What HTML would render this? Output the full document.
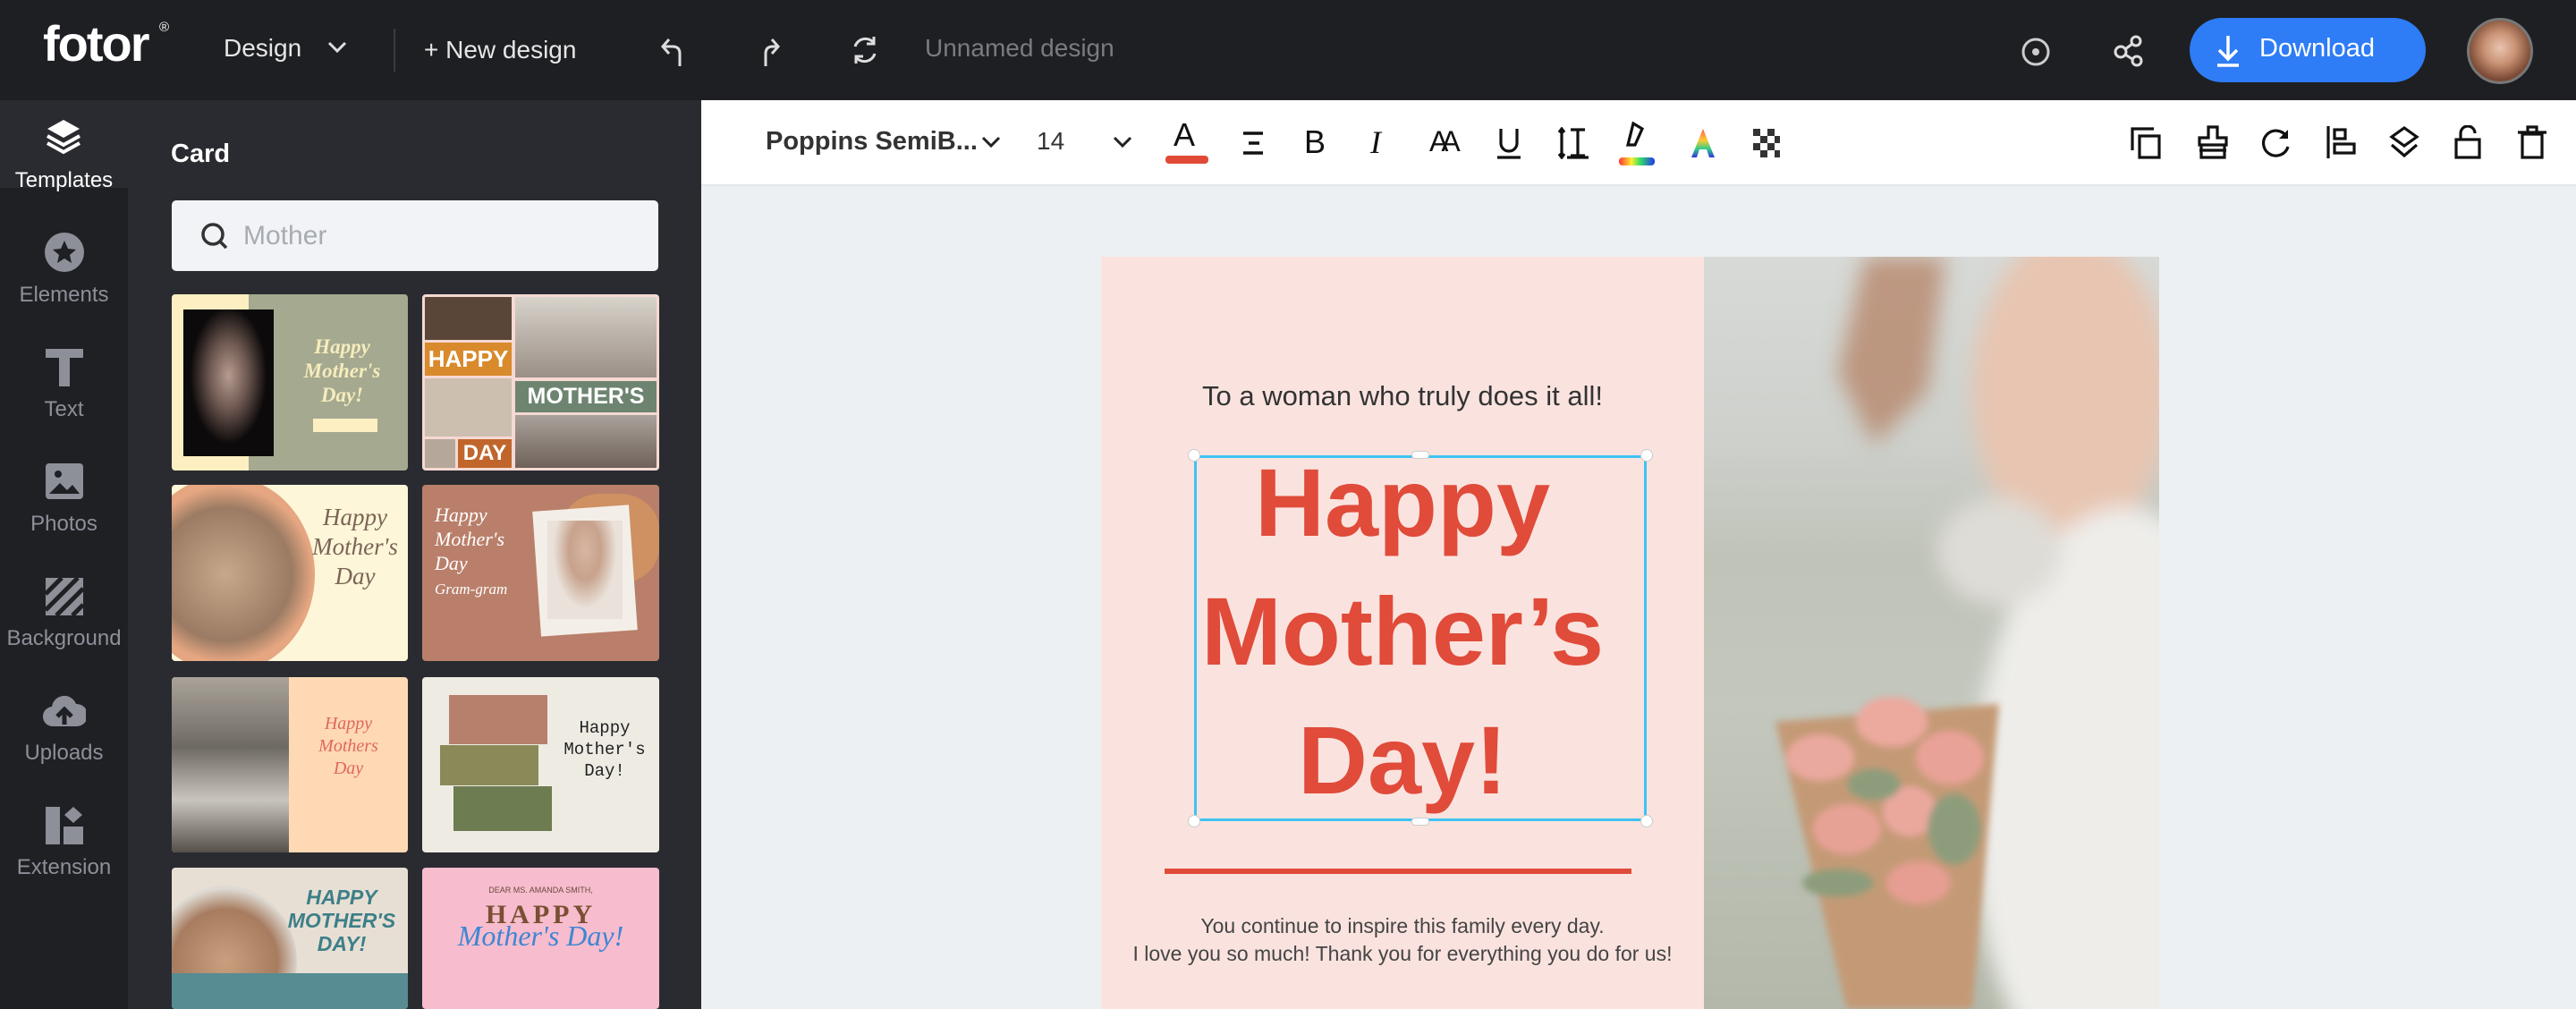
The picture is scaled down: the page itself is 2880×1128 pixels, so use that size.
<!DOCTYPE html>
<html><head><meta charset="utf-8"><style>
*{margin:0;padding:0;box-sizing:border-box}
html{overflow:hidden}
body{width:2880px;height:1128px;overflow:hidden;background:#edf0f3;font-family:"Liberation Sans",sans-serif;position:relative}
.a{position:absolute}
.top{left:0;top:0;width:2880px;height:112px;background:#1e1f23}
.rail{left:0;top:112px;width:143px;height:1016px;background:#1f2024}
.panel{left:143px;top:112px;width:641px;height:1016px;background:#2a2b30}
.tb{left:784px;top:112px;width:2096px;height:96px;background:#fff;border-bottom:2px solid #e3e6ea}
.ri{width:143px;text-align:center;color:#8d8f99;font-size:24px}
.th{border-radius:4px;overflow:hidden}
.ic{stroke:#111;fill:none;stroke-width:3.2}
</style></head><body>
<div class="a top"></div>
<div class="a" style="left:48px;top:16px;color:#fff;font-size:56px;font-weight:bold;letter-spacing:-2px">fotor</div>
<div class="a" style="left:178px;top:22px;color:#fff;font-size:15px">®</div>
<div class="a" style="left:250px;top:38px;color:#e6e6e6;font-size:28px">Design</div>
<svg class="a" style="left:366px;top:46px" width="22" height="14"><path d="M2 2l9 9 9-9" stroke="#ddd" stroke-width="3" fill="none"/></svg>
<div class="a" style="left:440px;top:32px;width:2px;height:48px;background:#3a3b40"></div>
<div class="a" style="left:474px;top:32px;color:#e6e6e6;font-size:28px;line-height:48px">+ New design</div>
<svg class="a" style="left:738px;top:36px" width="150" height="44"><path d="M22 38V24q0-8-8-8H4M10 8L3 16l7 8" stroke="#ddd" stroke-width="3" fill="none"/><path d="M106 38V24q0-8 8-8h6M113 8l7 8-7 8" stroke="#ddd" stroke-width="3" fill="none" transform="translate(12 0)"/></svg>
<svg class="a" style="left:950px;top:38px" width="34" height="36"><path d="M6 14A12 12 0 0 1 27 10M28 22A12 12 0 0 1 7 26M27 3v8h-8M7 33v-8h8" stroke="#ddd" stroke-width="3" fill="none"/></svg>
<div class="a" style="left:1034px;top:38px;color:#7a7b80;font-size:28px">Unnamed design</div>
<svg class="a" style="left:2258px;top:40px" width="36" height="36"><circle cx="18" cy="18" r="14" stroke="#ccc" stroke-width="3" fill="none"/><circle cx="18" cy="18" r="4" fill="#ccc"/></svg>
<svg class="a" style="left:2362px;top:38px" width="36" height="38"><circle cx="9" cy="20" r="6" stroke="#ddd" stroke-width="3" fill="none"/><circle cx="26" cy="8" r="5" stroke="#ddd" stroke-width="3" fill="none"/><circle cx="27" cy="30" r="5" stroke="#ddd" stroke-width="3" fill="none"/><path d="M14 17l8-6M14 23l8 5" stroke="#ddd" stroke-width="3"/></svg>
<div class="a" style="left:2448px;top:20px;width:264px;height:72px;border-radius:36px;background:#2e7cf6"></div>
<svg class="a" style="left:2476px;top:38px" width="30" height="38"><path d="M15 2v26M5 18l10 10 10-10M3 35h24" stroke="#fff" stroke-width="3.5" fill="none"/></svg>
<div class="a" style="left:2526px;top:38px;color:#fff;font-size:29px">Download</div>
<div class="a" style="left:2758px;top:20px;width:74px;height:74px;border-radius:50%;background:radial-gradient(circle at 50% 45%,#e9c4b0 0,#c99274 35%,#7b4a35 70%);border:3px solid #777"></div>

<div class="a rail"></div>
<div class="a panel"></div>
<div class="a" style="left:0;top:112px;width:143px;height:98px;background:#2a2b30"></div>
<svg class="a" style="left:50px;top:132px" width="42" height="42"><path d="M21 2L39 12 21 22 3 12z" fill="#fff"/><path d="M3 20l18 10 18-10M3 28l18 10 18-10" stroke="#fff" stroke-width="4" fill="none"/></svg>
<div class="a ri" style="top:188px;color:#fff">Templates</div>
<svg class="a" style="left:49px;top:259px" width="46" height="46"><circle cx="23" cy="23" r="22" fill="#8d8f99"/><path d="M23 10l4 9 9 1-7 6 2 9-8-5-8 5 2-9-7-6 9-1z" fill="#1f2024"/></svg>
<div class="a ri" style="top:316px">Elements</div>
<svg class="a" style="left:51px;top:390px" width="42" height="42"><path d="M0 0h42v10H27v32H15V10H0z" fill="#8d8f99"/></svg>
<div class="a ri" style="top:444px">Text</div>
<svg class="a" style="left:51px;top:518px" width="42" height="40"><rect x="0" y="0" width="42" height="40" rx="4" fill="#8d8f99"/><path d="M4 34l12-12 8 8 6-6 8 10z" fill="#1f2024"/><circle cx="14" cy="12" r="4" fill="#1f2024"/></svg>
<div class="a ri" style="top:572px">Photos</div>
<svg class="a" style="left:51px;top:646px" width="42" height="42"><rect width="42" height="42" fill="#8d8f99"/><path d="M0 18L18 0M0 36L36 0M12 42L42 12M30 42l12-12" stroke="#1f2024" stroke-width="5"/></svg>
<div class="a ri" style="top:700px">Background</div>
<svg class="a" style="left:48px;top:774px" width="48" height="40"><path d="M12 38a11 11 0 0 1-2-22 14 14 0 0 1 27-3 11 11 0 0 1 1 25z" fill="#8d8f99"/><path d="M24 36V20M16 27l8-8 8 8" stroke="#1f2024" stroke-width="5" fill="none"/></svg>
<div class="a ri" style="top:828px">Uploads</div>
<svg class="a" style="left:51px;top:902px" width="42" height="42"><rect x="0" y="0" width="16" height="42" fill="#8d8f99"/><rect x="20" y="22" width="22" height="20" fill="#8d8f99"/><path d="M31 0l10 9-10 9-10-9z" fill="#8d8f99"/></svg>
<div class="a ri" style="top:956px">Extension</div>

<div class="a" style="left:191px;top:156px;color:#fff;font-size:29px;font-weight:bold">Card</div>
<div class="a" style="left:192px;top:224px;width:544px;height:79px;border-radius:5px;background:#f1f3f6"></div>
<svg class="a" style="left:224px;top:248px" width="32" height="32"><circle cx="14" cy="14" r="11" stroke="#333" stroke-width="3.5" fill="none"/><path d="M22 22l7 7" stroke="#333" stroke-width="3.5"/></svg>
<div class="a" style="left:272px;top:247px;color:#a7abb2;font-size:30px">Mother</div>

<div class="a th" style="left:192px;top:329px;width:264px;height:197px;background:#a4a98f">
 <div class="a" style="left:0;top:0;width:86px;height:197px;background:#fdefc1"></div>
 <div class="a" style="left:13px;top:17px;width:101px;height:164px;background:radial-gradient(ellipse at 50% 45%,#b69c90 0,#6d5750 30%,#0c0a0a 60%)"></div>
 <div class="a" style="left:128px;top:45px;width:125px;text-align:center;color:#f6ecbd;font:italic bold 23px/27px 'Liberation Serif',serif">Happy<br>Mother's<br>Day!</div>
 <div class="a" style="left:158px;top:139px;width:72px;height:15px;background:#fdefc1"></div>
</div>
<div class="a th" style="left:472px;top:329px;width:265px;height:197px;background:#f5d9d2;border:3px solid #f5d9d2">
 <div class="a" style="left:0;top:0;width:97px;height:48px;background:#5a4638"></div>
 <div class="a" style="left:101px;top:0;width:158px;height:90px;background:linear-gradient(#d8d3cb,#9a8f86)"></div>
 <div class="a" style="left:0;top:51px;width:97px;height:37px;background:#d98a2c;color:#fff;font:bold 26px/37px 'Liberation Sans';text-align:center">HAPPY</div>
 <div class="a" style="left:101px;top:94px;width:158px;height:35px;background:#6d8471;color:#fff;font:bold 25px/35px 'Liberation Sans';text-align:center">MOTHER'S</div>
 <div class="a" style="left:0;top:91px;width:97px;height:65px;background:#cdbfb0"></div>
 <div class="a" style="left:0;top:159px;width:34px;height:32px;background:#b5a79a"></div>
 <div class="a" style="left:37px;top:159px;width:60px;height:32px;background:#c0662c;color:#fff;font:bold 24px/32px 'Liberation Sans';text-align:center">DAY</div>
 <div class="a" style="left:101px;top:132px;width:158px;height:59px;background:linear-gradient(#a9a29b,#6f6159)"></div>
</div>
<div class="a th" style="left:192px;top:542px;width:264px;height:197px;background:#fdf6d8">
 <div class="a" style="left:-40px;top:-10px;width:200px;height:220px;border-radius:50%;background:radial-gradient(circle,#c7a88b 0,#9b7b63 50%,#e5a681 66%)"></div>
 <div class="a" style="left:150px;top:20px;width:110px;text-align:center;color:#7a6457;font:italic 27px/33px 'Liberation Serif',serif">Happy<br>Mother's<br>Day</div>
</div>
<div class="a th" style="left:472px;top:542px;width:265px;height:197px;background:#b97f6a">
 <div class="a" style="left:155px;top:10px;width:110px;height:100px;background:#d9985f;border-radius:40%;opacity:.7"></div>
 <div class="a" style="left:128px;top:26px;width:108px;height:140px;background:#f3efe8;transform:rotate(-4deg)"></div>
 <div class="a" style="left:140px;top:40px;width:84px;height:110px;background:radial-gradient(ellipse at 50% 30%,#d8b6a2 0,#c7a28c 30%,#eae2da 60%)"></div>
 <div class="a" style="left:14px;top:20px;color:#fff;font:italic 22px/27px 'Liberation Serif',serif">Happy<br>Mother's<br>Day<br><span style="font-size:17px">Gram-gram</span></div>
</div>
<div class="a th" style="left:192px;top:757px;width:264px;height:196px;background:#fed9b4">
 <div class="a" style="left:0;top:0;width:131px;height:196px;background:linear-gradient(#aaa39a,#6e6a63 40%,#c9c5be 70%,#55504a)"></div>
 <div class="a" style="left:135px;top:40px;width:125px;text-align:center;color:#e0675f;font:italic 20px/25px 'Liberation Serif',serif">Happy<br>Mothers<br>Day</div>
</div>
<div class="a th" style="left:472px;top:757px;width:265px;height:196px;background:#eeebe3">
 <div class="a" style="left:30px;top:20px;width:110px;height:55px;background:#b7806d"></div>
 <div class="a" style="left:20px;top:76px;width:110px;height:45px;background:#8a8a58"></div>
 <div class="a" style="left:35px;top:122px;width:110px;height:50px;background:#6e7c52"></div>
 <div class="a" style="left:148px;top:45px;width:112px;text-align:center;color:#222;font:19px/24px 'Liberation Mono',monospace">Happy<br>Mother's<br>Day!</div>
</div>
<div class="a th" style="left:192px;top:970px;width:264px;height:158px;background:#e8dfd4">
 <div class="a" style="left:-20px;top:20px;width:160px;height:170px;border-radius:50%;background:radial-gradient(circle,#c9a07f 0,#a77c5f 50%,#dedad3 70%)"></div>
 <div class="a" style="left:0;top:118px;width:264px;height:40px;background:#568c92"></div>
 <div class="a" style="left:120px;top:20px;width:140px;text-align:center;color:#3d7f88;font:italic bold 23px/26px 'Liberation Sans'">HAPPY<br>MOTHER'S<br>DAY!</div>
</div>
<div class="a th" style="left:472px;top:970px;width:265px;height:158px;background:#f7bccd">
 <div class="a" style="left:0;top:20px;width:265px;text-align:center;color:#6b4a3e;font-size:9px">DEAR MS. AMANDA SMITH,</div>
 <div class="a" style="left:0;top:36px;width:265px;text-align:center;color:#7a4f33;font:bold 30px 'Liberation Serif',serif;letter-spacing:4px">HAPPY</div>
 <div class="a" style="left:0;top:58px;width:265px;text-align:center;color:#3d86d4;font:italic 32px 'Liberation Serif',serif">Mother's Day!</div>
</div>

<div class="a tb"></div>
<div class="a" style="left:856px;top:142px;color:#333;font-size:29px;font-weight:bold">Poppins SemiB...</div>
<svg class="a" style="left:1097px;top:152px" width="22" height="14"><path d="M2 2l9 9 9-9" stroke="#222" stroke-width="3" fill="none"/></svg>
<div class="a" style="left:1159px;top:142px;color:#333;font-size:28px">14</div>
<svg class="a" style="left:1244px;top:152px" width="22" height="14"><path d="M2 2l9 9 9-9" stroke="#222" stroke-width="3" fill="none"/></svg>
<div class="a" style="left:1312px;top:130px;color:#111;font-size:36px">A</div>
<div class="a" style="left:1303px;top:174px;width:48px;height:9px;border-radius:4px;background:#e04a36"></div>
<svg class="a" style="left:1388px;top:146px" width="26" height="28"><path d="M2 3h22M8 14h12M2 25h22" stroke="#111" stroke-width="3.5"/></svg>
<div class="a" style="left:1458px;top:138px;color:#111;font-size:36px">B</div>
<div class="a" style="left:1532px;top:138px;color:#111;font:italic 36px 'Liberation Serif'">I</div>
<div class="a" style="left:1598px;top:140px;color:#111;font-size:32px;letter-spacing:-8px">AA</div>
<svg class="a" style="left:1672px;top:142px" width="30" height="38"><path d="M6 2v16a9 9 0 0 0 18 0V2" class="ic"/><path d="M2 34h26" class="ic" stroke-width="4"/></svg>
<svg class="a" style="left:1742px;top:142px" width="34" height="36"><path d="M4 2v32M1 6l3-4 3 4M1 30l3 4 3-4M14 3h16M22 3v29M14 32h16M10 34h24" class="ic"/></svg>
<svg class="a" style="left:1808px;top:134px" width="44" height="52"><path d="M18 4l10 6-8 18h-8z" class="ic"/><rect x="2" y="42" width="40" height="9" rx="4" fill="url(#rb)"/><defs><linearGradient id="rb"><stop offset="0" stop-color="#f33"/><stop offset=".35" stop-color="#fe3"/><stop offset=".6" stop-color="#3d6"/><stop offset="1" stop-color="#23e"/></linearGradient><linearGradient id="ra" x1="0" y1="0" x2="0" y2="1"><stop offset="0" stop-color="#f55"/><stop offset=".4" stop-color="#fc3"/><stop offset=".7" stop-color="#3c8"/><stop offset="1" stop-color="#33d"/></linearGradient></defs></svg>
<svg class="a" style="left:1888px;top:142px" width="32" height="36"><path d="M16 2L3 34h6l3-9h8l3 9h6z" fill="url(#ra)"/></svg>
<svg class="a" style="left:1960px;top:144px" width="30" height="32"><g fill="#333"><rect x="0" y="0" width="8" height="8"/><rect x="16" y="0" width="8" height="8"/><rect x="8" y="8" width="8" height="8"/><rect x="24" y="8" width="6" height="8"/><rect x="0" y="16" width="8" height="8"/><rect x="16" y="16" width="8" height="8"/><rect x="8" y="24" width="8" height="8"/><rect x="24" y="24" width="6" height="8"/></g></svg>
<svg class="a" style="left:2382px;top:142px" width="36" height="36"><path d="M2 26V2h24" class="ic"/><rect x="10" y="10" width="22" height="24" class="ic"/></svg>
<svg class="a" style="left:2456px;top:140px" width="36" height="38"><path d="M13 2h10v12h10v8H3v-8h10zM5 22v14h26V22M3 28h30" class="ic"/></svg>
<svg class="a" style="left:2528px;top:142px" width="34" height="36"><path d="M28 10A14 14 0 1 0 30 22" class="ic"/><path d="M30 3v10h-10z" fill="#111"/></svg>
<svg class="a" style="left:2600px;top:140px" width="36" height="38"><path d="M3 1v36" class="ic" stroke-width="4"/><rect x="10" y="5" width="12" height="10" class="ic"/><rect x="10" y="21" width="22" height="10" class="ic"/></svg>
<svg class="a" style="left:2670px;top:140px" width="36" height="38"><path d="M18 3l14 10-14 10L4 13z M4 22l14 12 14-12" class="ic"/></svg>
<svg class="a" style="left:2742px;top:140px" width="34" height="38"><path d="M9 16V9a8 8 0 0 1 16 0" class="ic"/><rect x="4" y="16" width="26" height="20" class="ic"/></svg>
<svg class="a" style="left:2814px;top:140px" width="34" height="38"><path d="M1 8h32M12 8V2h10v6" class="ic"/><rect x="6" y="10" width="22" height="26" class="ic"/></svg>

<div class="a" style="left:1231px;top:287px;width:674px;height:841px;background:#fae3df"></div>
<div class="a" style="left:1231px;top:425px;width:674px;text-align:center;color:#333;font-size:31px">To a woman who truly does it all!</div>
<div class="a" style="left:1231px;top:490px;width:674px;text-align:center;color:#e04b3a;font-size:108px;font-weight:bold;line-height:144px">Happy<br>Mother’s<br>Day!</div>
<div class="a" style="left:1335px;top:509px;width:506px;height:409px;border:3px solid #3ec3f2"></div>
<div class="a" style="left:1328px;top:502px;width:14px;height:14px;border-radius:50%;background:#fff;border:1px solid #ccc"></div>
<div class="a" style="left:1834px;top:502px;width:14px;height:14px;border-radius:50%;background:#fff;border:1px solid #ccc"></div>
<div class="a" style="left:1328px;top:911px;width:14px;height:14px;border-radius:50%;background:#fff;border:1px solid #ccc"></div>
<div class="a" style="left:1834px;top:911px;width:14px;height:14px;border-radius:50%;background:#fff;border:1px solid #ccc"></div>
<div class="a" style="left:1578px;top:504px;width:20px;height:9px;border-radius:4px;background:#fff;border:1px solid #ccc"></div>
<div class="a" style="left:1578px;top:914px;width:20px;height:9px;border-radius:4px;background:#fff;border:1px solid #ccc"></div>
<div class="a" style="left:1302px;top:971px;width:522px;height:6px;background:#e04b3a"></div>
<div class="a" style="left:1231px;top:1020px;width:674px;text-align:center;color:#444;font-size:23px;line-height:31px">You continue to inspire this family every day.<br>I love you so much! Thank you for everything you do for us!</div>

<svg class="a" style="left:1905px;top:287px" width="509" height="841">
<defs><filter id="b"><feGaussianBlur stdDeviation="12"/></filter><filter id="b2"><feGaussianBlur stdDeviation="4"/></filter>
<linearGradient id="bg" x1="0" y1="0" x2="0" y2="1"><stop offset="0" stop-color="#d7dad7"/><stop offset=".25" stop-color="#cdd0cb"/><stop offset=".4" stop-color="#bfc3b8"/><stop offset=".6" stop-color="#c3c7bd"/><stop offset="1" stop-color="#b3b8aa"/></linearGradient></defs>
<rect width="509" height="841" fill="url(#bg)"/>
<g filter="url(#b)">
<path d="M180 0h90l-20 150 -60 60-40-80z" fill="#b7876c" opacity=".8"/>
<ellipse cx="410" cy="150" rx="110" ry="175" fill="#e7c5b1"/>
<ellipse cx="470" cy="620" rx="170" ry="340" fill="#eeedea"/>
<ellipse cx="330" cy="330" rx="70" ry="60" fill="#dedcd6"/>
</g>
<g filter="url(#b2)">
<path d="M80 520L330 500 300 841H160z" fill="#c49a76"/>
<ellipse cx="130" cy="560" rx="38" ry="26" fill="#eaa99e"/>
<ellipse cx="210" cy="520" rx="40" ry="28" fill="#eca99e"/>
<ellipse cx="275" cy="560" rx="38" ry="30" fill="#e9a297"/>
<ellipse cx="230" cy="620" rx="30" ry="28" fill="#eaa89d"/>
<ellipse cx="160" cy="640" rx="38" ry="28" fill="#e7a296"/>
<ellipse cx="240" cy="700" rx="36" ry="24" fill="#e69e92"/>
<ellipse cx="190" cy="590" rx="30" ry="18" fill="#8d9d7c"/>
<ellipse cx="280" cy="640" rx="30" ry="40" fill="#8d9d7c"/>
<ellipse cx="150" cy="700" rx="40" ry="16" fill="#8d9d7c"/>
</g>
</svg>
</body></html>
